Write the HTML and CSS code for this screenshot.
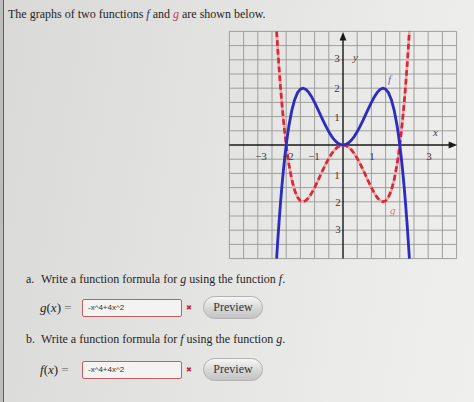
FILE: index.html
```html
<!DOCTYPE html>
<html>
<head>
<meta charset="utf-8">
<link rel="stylesheet" href="styles.css">
</head>
<body>
<div class="frame">
  <p class="title">The graphs of two functions <i class="fn-f">f</i> and <i class="fn-g">g</i> are shown below.</p>
  <div class="graph-row">
    <svg class="graph" width="240" height="238" viewBox="0 0 240 238" xmlns="http://www.w3.org/2000/svg">
      <g transform="matrix(28.4 0 0 28.4 118 119)">
        <path class="grid" d="M-4 -4V4M-3.5 -4V4M-3 -4V4M-2.5 -4V4M-2 -4V4M-1.5 -4V4M-1 -4V4M-0.5 -4V4M0.5 -4V4M1 -4V4M1.5 -4V4M2 -4V4M2.5 -4V4M3 -4V4M3.5 -4V4M4 -4V4M-4 -4H4M-4 -3.5H4M-4 -3H4M-4 -2.5H4M-4 -2H4M-4 -1.5H4M-4 -1H4M-4 -0.5H4M-4 0.5H4M-4 1H4M-4 1.5H4M-4 2H4M-4 2.5H4M-4 3H4M-4 3.5H4M-4 4H4"/>
        <path class="axis" d="M-4 0H3.75M0 4V-3.7"/>
        <path class="arrow" d="M4.02 0L3.72 -0.12L3.72 0.12Z M0 -3.98L-0.12 -3.68L0.12 -3.68Z"/>
        <polyline class="g-under" points="-2.3375,-4 -2.3,-3.412 -2.25,-2.689 -2.2,-2.033 -2.15,-1.439 -2.1,-0.904 -2.05,-0.426 -2,0 -1.95,0.376 -1.9,0.704 -1.8,1.231 -1.7,1.604 -1.6,1.843 -1.5,1.969 -1.4,1.999 -1.3,1.952 -1.2,1.843 -1.1,1.688 -1,1.5 -0.9,1.292 -0.8,1.075 -0.7,0.86 -0.6,0.655 -0.5,0.469 -0.4,0.307 -0.3,0.176 -0.2,0.079 -0.1,0.02 0,0 0.1,0.02 0.2,0.079 0.3,0.176 0.4,0.307 0.5,0.469 0.6,0.655 0.7,0.86 0.8,1.075 0.9,1.292 1,1.5 1.1,1.688 1.2,1.843 1.3,1.952 1.4,1.999 1.5,1.969 1.6,1.843 1.7,1.604 1.8,1.231 1.9,0.704 1.95,0.376 2,0 2.05,-0.426 2.1,-0.904 2.15,-1.439 2.2,-2.033 2.25,-2.689 2.3,-3.412 2.3375,-4"/>
        <polyline class="g-dash" points="-2.3375,-4 -2.3,-3.412 -2.25,-2.689 -2.2,-2.033 -2.15,-1.439 -2.1,-0.904 -2.05,-0.426 -2,0 -1.95,0.376 -1.9,0.704 -1.8,1.231 -1.7,1.604 -1.6,1.843 -1.5,1.969 -1.4,1.999 -1.3,1.952 -1.2,1.843 -1.1,1.688 -1,1.5 -0.9,1.292 -0.8,1.075 -0.7,0.86 -0.6,0.655 -0.5,0.469 -0.4,0.307 -0.3,0.176 -0.2,0.079 -0.1,0.02 0,0 0.1,0.02 0.2,0.079 0.3,0.176 0.4,0.307 0.5,0.469 0.6,0.655 0.7,0.86 0.8,1.075 0.9,1.292 1,1.5 1.1,1.688 1.2,1.843 1.3,1.952 1.4,1.999 1.5,1.969 1.6,1.843 1.7,1.604 1.8,1.231 1.9,0.704 1.95,0.376 2,0 2.05,-0.426 2.1,-0.904 2.15,-1.439 2.2,-2.033 2.25,-2.689 2.3,-3.412 2.3375,-4"/>
        <polyline class="f-line" points="-2.3375,4 -2.3,3.412 -2.25,2.689 -2.2,2.033 -2.15,1.439 -2.1,0.904 -2.05,0.426 -2,0 -1.95,-0.376 -1.9,-0.704 -1.8,-1.231 -1.7,-1.604 -1.6,-1.843 -1.5,-1.969 -1.4,-1.999 -1.3,-1.952 -1.2,-1.843 -1.1,-1.688 -1,-1.5 -0.9,-1.292 -0.8,-1.075 -0.7,-0.86 -0.6,-0.655 -0.5,-0.469 -0.4,-0.307 -0.3,-0.176 -0.2,-0.079 -0.1,-0.02 0,0 0.1,-0.02 0.2,-0.079 0.3,-0.176 0.4,-0.307 0.5,-0.469 0.6,-0.655 0.7,-0.86 0.8,-1.075 0.9,-1.292 1,-1.5 1.1,-1.688 1.2,-1.843 1.3,-1.952 1.4,-1.999 1.5,-1.969 1.6,-1.843 1.7,-1.604 1.8,-1.231 1.9,-0.704 1.95,-0.376 2,0 2.05,0.426 2.1,0.904 2.15,1.439 2.2,2.033 2.25,2.689 2.3,3.412 2.3375,4"/>
      </g>
      <g class="ticks">
        <text x="36" y="134">−3</text>
        <text x="63" y="134">−2</text>
        <text x="89" y="134">−1</text>
        <text x="147" y="134">1</text>
        <text x="204" y="134">3</text>
        <text x="112" y="36">3</text>
        <text x="112" y="66">2</text>
        <text x="112" y="95">1</text>
        <text x="112" y="153">1</text>
        <text x="113" y="180">2</text>
        <text x="113" y="207">3</text>
      </g>
      <text class="axis-label" x="128" y="35">y</text>
      <text class="axis-label" x="208" y="110">x</text>
      <text class="curve-f" x="163" y="57">f</text>
      <text class="curve-g" x="165" y="188">g</text>
    </svg>
  </div>

  <div class="part part-a">
    <span class="part-letter">a.</span>
    <span>Write a function formula for <i>g</i> using the function <i>f</i>.</span>
  </div>
  <div class="answer answer-a">
    <span class="math"><i>g</i>(<i>x</i>) <span class="eq">=</span></span>
    <span class="input">-x^4+4x^2</span>
    <span class="cross">✖</span>
    <span class="btn">Preview</span>
  </div>

  <div class="part part-b">
    <span class="part-letter">b.</span>
    <span>Write a function formula for <i>f</i> using the function <i>g</i>.</span>
  </div>
  <div class="answer answer-b">
    <span class="math"><i>f</i>(<i>x</i>) <span class="eq">=</span></span>
    <span class="input">-x^4+4x^2</span>
    <span class="cross">✖</span>
    <span class="btn">Preview</span>
  </div>
</div>
</body>
</html>
```

FILE: styles.css
```css
html, body {
  margin: 0;
  padding: 0;
}
body {
  width: 474px;
  height: 402px;
  overflow: hidden;
  background: linear-gradient(100deg, #d9d9d7 0%, #e2e2e0 40%, #ebebea 75%, #efefee 100%);
  font-family: "Liberation Serif", "Times New Roman", serif;
  color: #262626;
}
.frame {
  box-sizing: border-box;
  height: 402px;
  border-left: 3px solid #bdbdbb;
  box-shadow: inset 1px 0 0 #5e5e5e;
  padding-left: 5px;
}
.title {
  margin: 0;
  padding-top: 6px;
  font-size: 12px;
  line-height: 16px;
}
.fn-f { color: #2e2e8a; }
.fn-g { color: #c4405a; }

.graph-row {
  margin-top: 4px;
  padding-left: 217px;
  height: 238px;
}
.graph { display: block; }
.grid {
  fill: none;
  stroke: #979797;
  stroke-width: 0.032;
}
.axis {
  fill: none;
  stroke: #1a1a1a;
  stroke-width: 0.05;
}
.arrow { fill: #1a1a1a; }
.f-line {
  fill: none;
  stroke: #2c2cc0;
  stroke-width: 0.1;
  stroke-linejoin: round;
}
.g-under {
  fill: none;
  stroke: #f1a3a6;
  stroke-width: 0.09;
  stroke-linejoin: round;
}
.g-dash {
  fill: none;
  stroke: #d42a3a;
  stroke-width: 0.095;
  stroke-dasharray: 0.2 0.11;
}
.ticks text {
  font-family: "Liberation Serif", serif;
  font-size: 11px;
  fill: #3a3a3a;
  text-anchor: middle;
}
.axis-label {
  font-family: "Liberation Serif", serif;
  font-style: italic;
  font-size: 11px;
  fill: #444;
}
.curve-f {
  font-family: "Liberation Serif", serif;
  font-style: italic;
  font-size: 11px;
  fill: #6a6aa0;
}
.curve-g {
  font-family: "Liberation Serif", serif;
  font-style: italic;
  font-size: 11px;
  fill: #d0806e;
}

.part {
  display: flex;
  font-size: 12px;
  line-height: 16px;
  padding-left: 18px;
}
.part-letter {
  width: 15px;
}
.part-a { margin-top: 7px; }
.part-b { margin-top: 12px; }

.answer {
  display: flex;
  align-items: center;
  height: 23px;
  padding-left: 32px;
}
.answer-a { margin-top: 9px; }
.answer-b { margin-top: 11px; }
.math {
  font-size: 13px;
  width: 42px;
  white-space: nowrap;
}
.eq { color: #777; }
.input {
  box-sizing: border-box;
  width: 100px;
  height: 18px;
  border: 1px solid #c25e62;
  border-radius: 2px;
  background: #f4f3f2;
  font-family: "Liberation Sans", Arial, sans-serif;
  font-size: 8px;
  line-height: 16px;
  padding-left: 5px;
  color: #333;
}
.cross {
  color: #c8243a;
  font-size: 7px;
  margin-left: 4px;
  width: 17px;
  font-family: "DejaVu Sans", sans-serif;
}
.btn {
  box-sizing: border-box;
  width: 60px;
  height: 23px;
  border: 1px solid #b2b2b2;
  border-radius: 12px;
  background: linear-gradient(#f6f6f6, #d4d4d4 60%, #c4c4c4);
  text-align: center;
  font-size: 12px;
  line-height: 20px;
  color: #333;
}
```
